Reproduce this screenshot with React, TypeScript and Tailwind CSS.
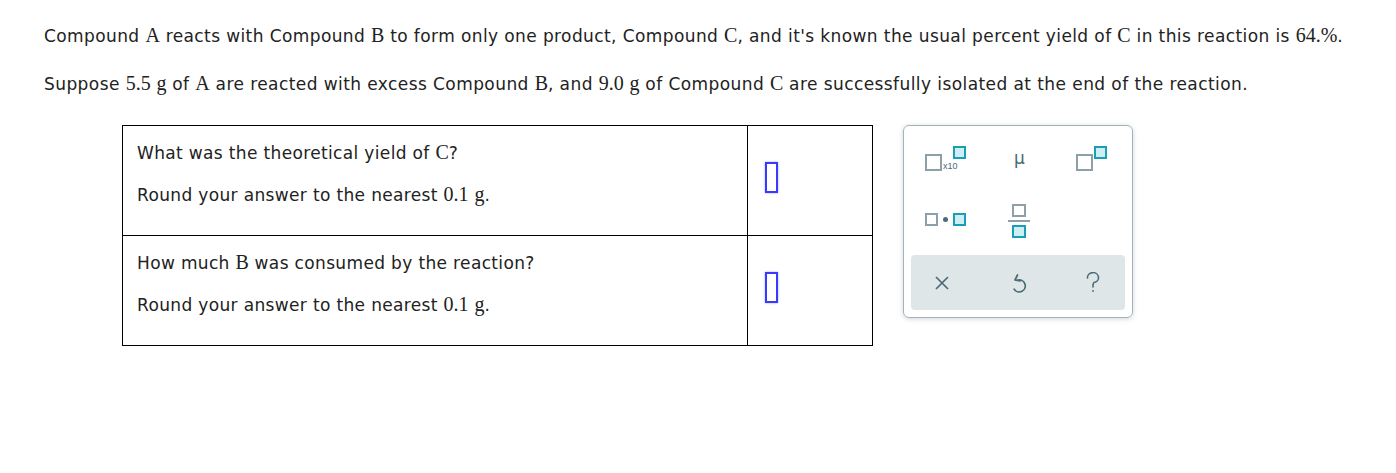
import React from "react";

const M = ({ children }: { children: React.ReactNode }) => (
  <span className="font-['Liberation_Serif',serif] text-[20px] tracking-normal">{children}</span>
);

const GraySq = ({ size = "w-[17px] h-[17px]" }: { size?: string }) => (
  <span className={`block ${size} border-2 border-[#8ba0a8] bg-white`} />
);

const TealSq = ({ size = "w-[13px] h-[13px]" }: { size?: string }) => (
  <span className={`block ${size} border-2 border-[#1b9db3] bg-[#cdeff4]`} />
);

const AnswerBox = () => (
  <span className="block w-[13px] h-[31px] border-2 border-[#3a3aff] shadow-[0_0_2px_#9ea6ff]" />
);

const Row = ({ q }: { q: React.ReactNode }) => (
  <div className="flex h-[109px]">
    <div className="w-[625px] border-r border-black pl-[14px] pt-[14px] flex flex-col gap-[18px]">
      <div className="leading-[24px] h-[24px]">{q}</div>
      <div className="leading-[24px] h-[24px]">
        Round your answer to the nearest <M>0.1</M> <M>g</M>.
      </div>
    </div>
    <div className="flex-1 pl-[17px] flex items-start">
      <span className="mt-[36px]">
        <AnswerBox />
      </span>
    </div>
  </div>
);

export default function App() {
  return (
    <div className="bg-white w-[1396px] h-[473px] text-[#222] font-['DejaVu_Sans','Verdana',sans-serif] text-[17px] pl-[44px] pt-[22px]">
      <p className="leading-[26px] h-[26px] whitespace-nowrap tracking-[0.4px]">
        Compound <M>A</M> reacts with Compound <M>B</M> to form only one product, Compound <M>C</M>, and it's known the usual percent yield of <M>C</M> in this reaction is <M>64.%</M>.
      </p>
      <p className="leading-[26px] h-[26px] mt-[22px] whitespace-nowrap tracking-[0.42px]">
        Suppose <M>5.5</M> <M>g</M> of <M>A</M> are reacted with excess Compound <M>B</M>, and <M>9.0</M> <M>g</M> of Compound <M>C</M> are successfully isolated at the end of the reaction.
      </p>
      <div className="flex gap-[30px] mt-[29px] ml-[78px] items-start">
        <div className="w-[751px] border border-black tracking-[0.35px]">
          <Row q={<>What was the theoretical yield of <M>C</M>?</>} />
          <div className="border-t border-black" />
          <Row q={<>How much <M>B</M> was consumed by the reaction?</>} />
        </div>
        <div className="w-[230px] h-[193px] rounded-[6px] border border-[#a5b3b8] shadow-[0_1px_5px_rgba(120,140,150,0.35)] px-[7px] pt-[20px] pb-[7px] flex flex-col">
          <div className="grid grid-cols-3 h-[58px]">
            <div className="flex items-start justify-center">
              <div className="flex items-start -ml-[2px]">
                <span className="mt-[8px]">
                  <GraySq />
                </span>
                <span className="text-[9px] leading-[10px] text-[#4a6a75] font-['Liberation_Sans',sans-serif] mt-[15px] ml-[1px]">x10</span>
                <span className="-ml-[4px]">
                  <TealSq />
                </span>
              </div>
            </div>
            <div className="flex items-start justify-center pl-[3px]">
              <span className="text-[#4a6a75] text-[17px] leading-[20px] mt-[2px] font-['DejaVu_Sans',sans-serif]">μ</span>
            </div>
            <div className="flex items-start justify-center pl-[5px]">
              <span className="mt-[8px]">
                <GraySq />
              </span>
              <span className="ml-[1px]">
                <TealSq />
              </span>
            </div>
          </div>
          <div className="grid grid-cols-3 h-[51px]">
            <div className="flex items-start justify-center">
              <div className="flex items-center gap-[5px] mt-[9px] -ml-[2px]">
                <GraySq size="w-[13px] h-[13px]" />
                <span className="block w-[5px] h-[5px] rounded-full bg-[#4a6a75]" />
                <TealSq />
              </div>
            </div>
            <div className="flex items-start justify-center pl-[3px]">
              <div className="flex flex-col items-center">
                <GraySq size="w-[14px] h-[13px]" />
                <span className="block w-[22px] h-[2px] bg-[#8ba0a8] my-[3px]" />
                <TealSq size="w-[14px] h-[13px]" />
              </div>
            </div>
            <div />
          </div>
          <div className="h-[55px] rounded-[4px] bg-[#dfe6e8] grid grid-cols-3 items-center">
            <div className="flex justify-center -ml-[10px]">
              <svg width="18" height="18" viewBox="0 0 18 18" fill="none" stroke="#4a6a75" strokeWidth="1.7">
                <path d="M3 3 L15 15 M15 3 L3 15" />
              </svg>
            </div>
            <div className="flex justify-center pl-[3px]">
              <svg width="18" height="22" viewBox="0 0 18 22" fill="none" stroke="#4a6a75" strokeWidth="1.7" strokeLinecap="round" strokeLinejoin="round">
                <path d="M4.2 17.2 A6 6 0 1 0 7.5 8.2" />
                <path d="M7.5 3 L5 8 L10 9" />
              </svg>
            </div>
            <div className="flex justify-center pl-[7px]">
              <svg width="16" height="22" viewBox="0 0 16 22" fill="none" stroke="#4a6a75" strokeWidth="1.6" strokeLinecap="round">
                <path d="M2.5 6 A5.5 5 0 1 1 9 10.5 Q8 11.5 8 13 L8 15" />
                <circle cx="8" cy="19" r="0.9" fill="#4a6a75" stroke="none" />
              </svg>
            </div>
          </div>
        </div>
      </div>
    </div>
  );
}
